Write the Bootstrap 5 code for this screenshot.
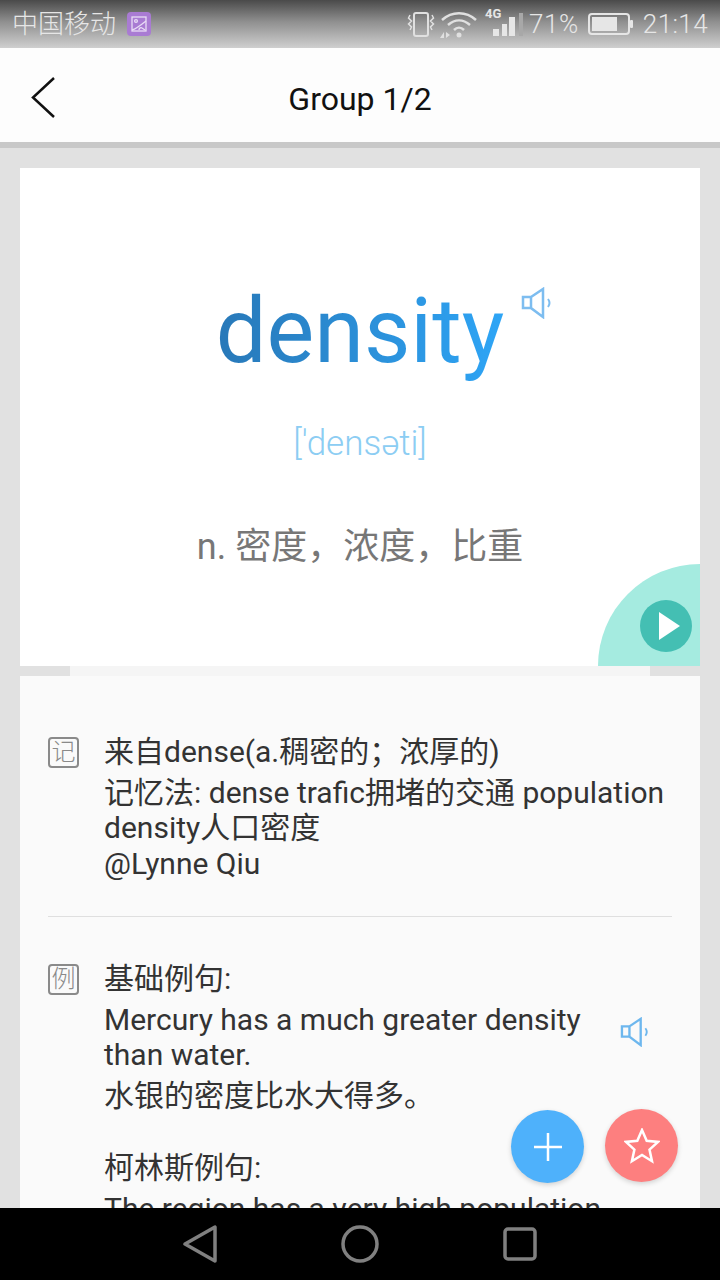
<!DOCTYPE html>
<html lang="zh">
<head>
  <meta charset="UTF-8">
  <title>Group 1/2</title>
  <link href="https://cdn.jsdelivr.net/npm/bootstrap@5.3.3/dist/css/bootstrap.min.css" rel="stylesheet">
  <style>
    html, body { height: 100%; }
    body {
      background-color: #e1e1e1;
      font-family: Roboto, "Noto Sans CJK SC", sans-serif;
      overflow: hidden;
    }
    .screen { width: 720px; height: 1280px; }
    .status-bar {
      height: 48px;
      padding: 0 12px 0 12px;
      background: linear-gradient(#4a4a4a, #8f8f8f 45%, #cfcfcf);
      color: #e6e6e6;
      font-size: 26px;
      line-height: 48px;
    }
    .carrier { font-weight: 300; }
    .status-icon { margin-left: 11px; }
    .status-wifi { margin-left: 5px; }
    .status-num { font-weight: 300; letter-spacing: .6px; margin-left: 6px; }
    .status-batt { margin-left: 9px; }
    .status-time { font-weight: 300; letter-spacing: .4px; margin-left: 9px; }
    .top-bar {
      height: 100px;
      background-color: #fdfdfd;
      border-bottom: 6px solid #c8c8c8;
    }
    .top-title { font-size: 32px; color: #111; line-height: 102px; }
    .back-btn { position: absolute; left: 30px; top: 28px; }
    .page-body { padding: 20px 20px 0; overflow: hidden; position: relative; }
    .word-card {
      height: 498px;
      background-color: #fff;
      position: relative;
      padding-top: 103px;
    }
    .word-line { height: 122px; }
    .word-text {
      font-size: 90px;
      line-height: 122px;
      background: linear-gradient(90deg, #2878b8, #2ea5f6);
      -webkit-background-clip: text;
      background-clip: text;
      color: transparent;
      position: relative;
    }
    .word-sound { position: absolute; left: 305px; top: 16px; }
    .phonetic { font-size: 35px; line-height: 40px; color: #8ccdf3; margin-top: 31px; font-weight: 300; }
    .meaning { font-size: 36px; line-height: 50px; color: #777; margin-top: 58px; }
    .corner {
      position: absolute;
      right: 0;
      bottom: 0;
      width: 102px;
      height: 102px;
      background-color: #a5ebe0;
      border-top-left-radius: 102px;
    }
    .corner svg { position: absolute; left: 42px; top: 36px; }
    .strip { height: 10px; margin: 0 50px; background-color: #f5f5f5; }
    .note-card {
      background-color: #fafafa;
      padding: 58px 28px 0;
      height: 600px;
      color: #333;
      font-size: 30px;
      line-height: 35.5px;
    }
    .mark-box {
      width: 31px;
      height: 31px;
      border: 2px solid #8a8a8a;
      border-radius: 4px;
      color: #8a8a8a;
      font-size: 24px;
      line-height: 26px;
      text-align: center;
      font-weight: 300;
      flex: none;
      margin: 3px 25px 0 0;
    }
    .note-line { margin-top: 5px; }
    .note-gap { height: 37px; }
    .rule-line { border-top: 1px solid #dfdfdf; margin: 35px 0 44px; }
    .line-sound { flex: none; margin: 20px 20px 0 39px; }
    .fab {
      position: absolute;
      width: 73px;
      height: 73px;
      border-radius: 50%;
      box-shadow: 0 2px 5px rgba(0, 0, 0, .16);
    }
    .fab-add { left: 511px; top: 1110px; background-color: #4eb1fb; }
    .fab-star { left: 605px; top: 1109px; background-color: #fd7f7f; }
    .nav-bottom { height: 72px; background-color: #000; position: absolute; left: 0; top: 1208px; width: 720px; }
  </style>
</head>
<body>
  <div class="screen d-flex flex-column position-relative overflow-hidden">

    <div class="status-bar d-flex align-items-center">
      <span class="carrier">中国移动</span>
      <svg class="status-icon" width="24" height="24" viewBox="0 0 24 24" fill="none" stroke="#e9dcf5" stroke-width="1.3">
        <rect width="24" height="24" rx="4" fill="#a97bd3" stroke="none"/>
        <rect x="5" y="5" width="14" height="14"/>
        <circle cx="9" cy="9" r="1.4"/>
        <path d="M5 18c4-1 9-5 14-9M12 18c0-2 2-3 3-2l3 2"/>
      </svg>
      <div class="ms-auto d-flex align-items-center">
        <svg width="28" height="30" viewBox="0 0 28 30" fill="none" stroke="#e0e0e0" stroke-width="2">
          <rect x="7" y="4" width="14" height="23" rx="2"/>
          <path d="M3 6l-1.500 3 3 3-3 3 3 3-1.500 3M25 6l1.500 3-3 3 3 3-3 3 1.500 3" stroke-width="1.500"/>
        </svg>
        <svg class="status-wifi" width="38" height="30" viewBox="0 0 38 30" fill="none" stroke="#e0e0e0" stroke-width="2.500">
          <path d="M2 11c10-9 24-9 34 0M8 16c7-6 15-6 22 0M14 21c3-3 7-3 10 0"/>
          <circle cx="19" cy="26" r="2.500" fill="#e0e0e0" stroke="none"/>
          <path d="M0 29l4-6v6zM6 23l4 3-4 3z" fill="#e0e0e0" stroke="none"/>
        </svg>
        <svg class="ms-1" width="41" height="34" viewBox="0 0 41 34">
          <text x="3" y="11" font-family="Roboto" font-weight="700" font-size="13" fill="#e6e6e6">4G</text>
          <rect x="11" y="22" width="6" height="7" fill="#e6e6e6"/>
          <rect x="20" y="17" width="5" height="12" fill="#e6e6e6"/>
          <rect x="27" y="10" width="6" height="19" fill="#e6e6e6"/>
          <rect x="37" y="6" width="4" height="23" fill="#a8a8a8"/>
        </svg>
        <span class="status-num">71%</span>
        <svg class="status-batt" width="46" height="24" viewBox="0 0 46 24" fill="none">
          <rect x="1" y="2" width="40" height="20" rx="3" stroke="#e6e6e6" stroke-width="2"/>
          <rect x="4" y="5" width="25" height="14" fill="#e6e6e6"/>
          <rect x="42" y="8" width="3" height="8" rx="1" fill="#e6e6e6"/>
        </svg>
        <span class="status-time">21:14</span>
      </div>
    </div>

    <div class="top-bar position-relative text-center">
      <svg class="back-btn" width="28" height="44" viewBox="0 0 28 44" fill="none" stroke="#111" stroke-width="2.500">
        <path d="M24 2L3 21.500 24 41"/>
      </svg>
      <div class="top-title">Group 1/2</div>
    </div>

    <div class="page-body flex-grow-1">
      <div class="word-card text-center">
        <div class="word-line d-flex justify-content-center">
          <span class="word-text">density
            <svg class="word-sound" width="34" height="32" viewBox="0 0 34 32" fill="none" stroke="#7dbdf0" stroke-width="2.500">
              <path d="M2 10h8v11H2zM10 10L22 2v28L10 21z"/>
              <path d="M27 12q3 4 0 8" stroke-width="2"/>
            </svg>
          </span>
        </div>
        <div class="phonetic">['densəti]</div>
        <div class="meaning">n. 密度，浓度，比重</div>
        <div class="corner">
          <svg width="52" height="52" viewBox="0 0 52 52">
            <circle cx="26" cy="26" r="26" fill="#44bfb3"/>
            <path d="M19 12l21 14-21 14z" fill="#fff"/>
          </svg>
        </div>
      </div>
      <div class="strip"></div>
      <div class="note-card">
        <div class="d-flex">
          <div class="mark-box">记</div>
          <div class="flex-grow-1">
            <div>来自dense(a.稠密的；浓厚的)</div>
            <div class="note-line">记忆法: dense trafic拥堵的交通 population density人口密度</div>
            <div>@Lynne Qiu</div>
          </div>
        </div>
        <div class="rule-line"></div>
        <div class="d-flex">
          <div class="mark-box">例</div>
          <div class="flex-grow-1">
            <div>基础例句:</div>
            <div class="d-flex">
              <div class="flex-grow-1">
                <div class="note-line">Mercury has a much greater density than water.</div>
                <div class="note-line">水银的密度比水大得多。</div>
              </div>
              <svg class="line-sound" width="32" height="30" viewBox="0 0 34 32" fill="none" stroke="#6db7ee" stroke-width="2.500">
                <path d="M2 10h8v11H2zM10 10L22 2v28L10 21z"/>
                <path d="M27 12q3 4 0 8" stroke-width="2"/>
              </svg>
            </div>
            <div class="note-gap"></div>
            <div>柯林斯例句:</div>
            <div class="note-line">The region has a very high population</div>
          </div>
        </div>
      </div>
    </div>

    <div class="fab fab-add d-flex align-items-center justify-content-center">
      <svg width="28" height="28" viewBox="0 0 28 28" stroke="#fff" stroke-width="2.500"><path d="M14 0v28M0 14h28"/></svg>
    </div>
    <div class="fab fab-star d-flex align-items-center justify-content-center">
      <svg width="36" height="36" viewBox="0 0 36 36" fill="none" stroke="#fff" stroke-width="2.500" stroke-linejoin="miter">
        <path d="M18 2l4.700 10.800 11.300 1.100-8.500 7.700 2.500 11.600L18 26.900 7.900 33.200l2.500-11.600L2 13.900l11.300-1.100z"/>
      </svg>
    </div>

    <div class="nav-bottom">
      <svg class="position-absolute" style="left:183px;top:17px" width="34" height="38" viewBox="0 0 34 38" fill="none" stroke="#808080" stroke-width="3.500" stroke-linejoin="round">
        <path d="M2 19L32 2v34z"/>
      </svg>
      <svg class="position-absolute" style="left:341px;top:17px" width="38" height="38" viewBox="0 0 38 38" fill="none" stroke="#808080" stroke-width="3.500">
        <circle cx="19" cy="19" r="17"/>
      </svg>
      <svg class="position-absolute" style="left:503px;top:19px" width="34" height="34" viewBox="0 0 34 34" fill="none" stroke="#808080" stroke-width="3.500">
        <rect x="2" y="2" width="30" height="30" rx="3"/>
      </svg>
    </div>
  </div>
  <script src="https://cdn.jsdelivr.net/npm/bootstrap@5.3.3/dist/js/bootstrap.bundle.min.js"></script>
</body>
</html>
